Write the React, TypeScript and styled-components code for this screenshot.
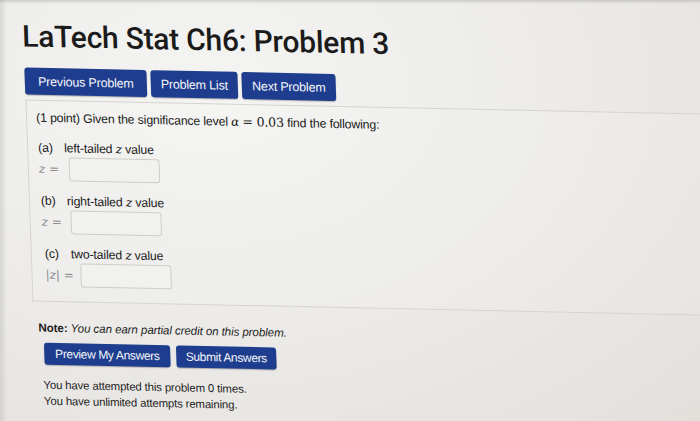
import React from "react";
import styled, { createGlobalStyle } from "styled-components";

const Global = createGlobalStyle`
  html, body { margin: 0; padding: 0; }
  body {
    width: 700px;
    height: 421px;
    overflow: hidden;
    font-family: "Liberation Sans", Arial, sans-serif;
    background:
      linear-gradient(180deg, rgba(140,140,140,0.35) 0px, rgba(140,140,140,0) 4px),
      linear-gradient(90deg, rgba(160,160,158,0.3) 0px, rgba(160,160,158,0) 7px),
      radial-gradient(ellipse at 30% 20%, #f4f4f2 0%, #edecea 45%, #e3e0dc 100%);
  }
`;

const Page = styled.div`
  width: 720px;
  padding: 19px 0 0 21px;
  box-sizing: border-box;
  transform: skew(2deg, 1.2deg);
  transform-origin: 0 0;
  color: #1e1e1e;
`;

const Title = styled.h1`
  margin: 0 0 14px 0;
  font-family: "Roboto", "Liberation Sans", sans-serif;
  font-weight: 500;
  font-size: 30px;
  line-height: 34px;
  letter-spacing: -0.25px;
  color: #1b1b1b;
`;

const NavRow = styled.div`
  display: flex;
  gap: 4px;
  margin-left: 1px;
`;

const Button = styled.button<{ $w: number; $h?: number; $small?: boolean }>`
  width: ${(p) => p.$w}px;
  height: ${(p) => p.$h ?? 27}px;
  padding: 0;
  border: none;
  border-radius: 3px;
  background: #1f3d8e;
  color: #f4f6fb;
  font-family: "Liberation Sans", Arial, sans-serif;
  font-size: ${(p) => (p.$small ? 12 : 12.5)}px;
  letter-spacing: ${(p) => (p.$small ? -0.35 : -0.2)}px;
  cursor: pointer;
  box-shadow: 0 1px 1px rgba(0, 0, 0, 0.25);
`;

const ProblemBox = styled.div`
  margin-top: 5px;
  margin-left: 1px;
  border: 1px solid #d6d4d0;
  border-right: none;
  background: rgba(255, 255, 255, 0.1);
  padding: 9px 0 20px 9px;
  height: 202px;
  box-sizing: border-box;
`;

const Text = styled.p`
  margin: 0;
  font-size: 12.3px;
  line-height: 16px;
  color: #202020;
  letter-spacing: -0.15px;
`;

const Part = styled.div<{ $indent: number }>`
  margin-left: ${(p) => p.$indent}px;
  margin-top: ${(p) => (p.$indent === 1 ? 14 : 12)}px;
`;

const Label = styled.span`
  display: inline-block;
  width: 26px;
`;

const Math = styled.span`
  font-family: "DejaVu Serif", "Liberation Serif", serif;
  font-style: italic;
  font-size: 12px;
`;

const MathN = styled.span`
  font-family: "DejaVu Serif", "Liberation Serif", serif;
  font-size: 12.5px;
`;

const AnswerRow = styled.div`
  display: flex;
  align-items: center;
  margin-top: 1px;
`;

const Eq = styled.span<{ $w: number }>`
  width: ${(p) => p.$w}px;
  font-family: "DejaVu Serif", "Liberation Serif", serif;
  font-size: 12px;
  color: #8a8a8a;
  i { font-style: italic; }
`;

const Input = styled.input`
  width: 91px;
  height: 24px;
  box-sizing: border-box;
  border: 1px solid #cfcdc9;
  border-radius: 3px;
  background: #f1f1ef;
  outline: none;
`;

const Note = styled.p`
  margin: 19px 0 0 6px;
  font-size: 11.6px;
  letter-spacing: -0.1px;
  color: #1e1e1e;
  b { font-weight: bold; }
  i { font-style: italic; }
`;

const SubmitRow = styled.div`
  display: flex;
  gap: 6px;
  margin: 9px 0 0 11px;
`;

const Status = styled.div`
  margin: 12px 0 0 9px;
  font-size: 11.4px;
  letter-spacing: -0.15px;
  line-height: 16px;
  color: #1e1e1e;
`;

export default function App() {
  return (
    <>
      <Global />
      <Page>
        <Title>LaTech Stat Ch6: Problem 3</Title>
        <NavRow>
          <Button $w={122}>Previous Problem</Button>
          <Button $w={87}>Problem List</Button>
          <Button $w={94}>Next Problem</Button>
        </NavRow>
        <ProblemBox>
          <Text>
            (1 point) Given the significance level <Math>α</Math> <MathN>= 0.03</MathN> find the following:
          </Text>
          <Part $indent={1}>
            <Text>
              <Label>(a)</Label>left-tailed <Math>z</Math> value
            </Text>
            <AnswerRow>
              <Eq $w={30}><i>z</i> =</Eq>
              <Input />
            </AnswerRow>
          </Part>
          <Part $indent={2}>
            <Text>
              <Label>(b)</Label>right-tailed <Math>z</Math> value
            </Text>
            <AnswerRow>
              <Eq $w={29}><i>z</i> =</Eq>
              <Input />
            </AnswerRow>
          </Part>
          <Part $indent={4}>
            <Text>
              <Label>(c)</Label>two-tailed <Math>z</Math> value
            </Text>
            <AnswerRow>
              <Eq $w={35}>|<i>z</i>| =</Eq>
              <Input />
            </AnswerRow>
          </Part>
        </ProblemBox>
        <Note>
          <b>Note:</b> <i>You can earn partial credit on this problem.</i>
        </Note>
        <SubmitRow>
          <Button $w={126} $h={22} $small>Preview My Answers</Button>
          <Button $w={100} $h={22} $small>Submit Answers</Button>
        </SubmitRow>
        <Status>
          You have attempted this problem 0 times.
          <br />
          You have unlimited attempts remaining.
        </Status>
      </Page>
    </>
  );
}
